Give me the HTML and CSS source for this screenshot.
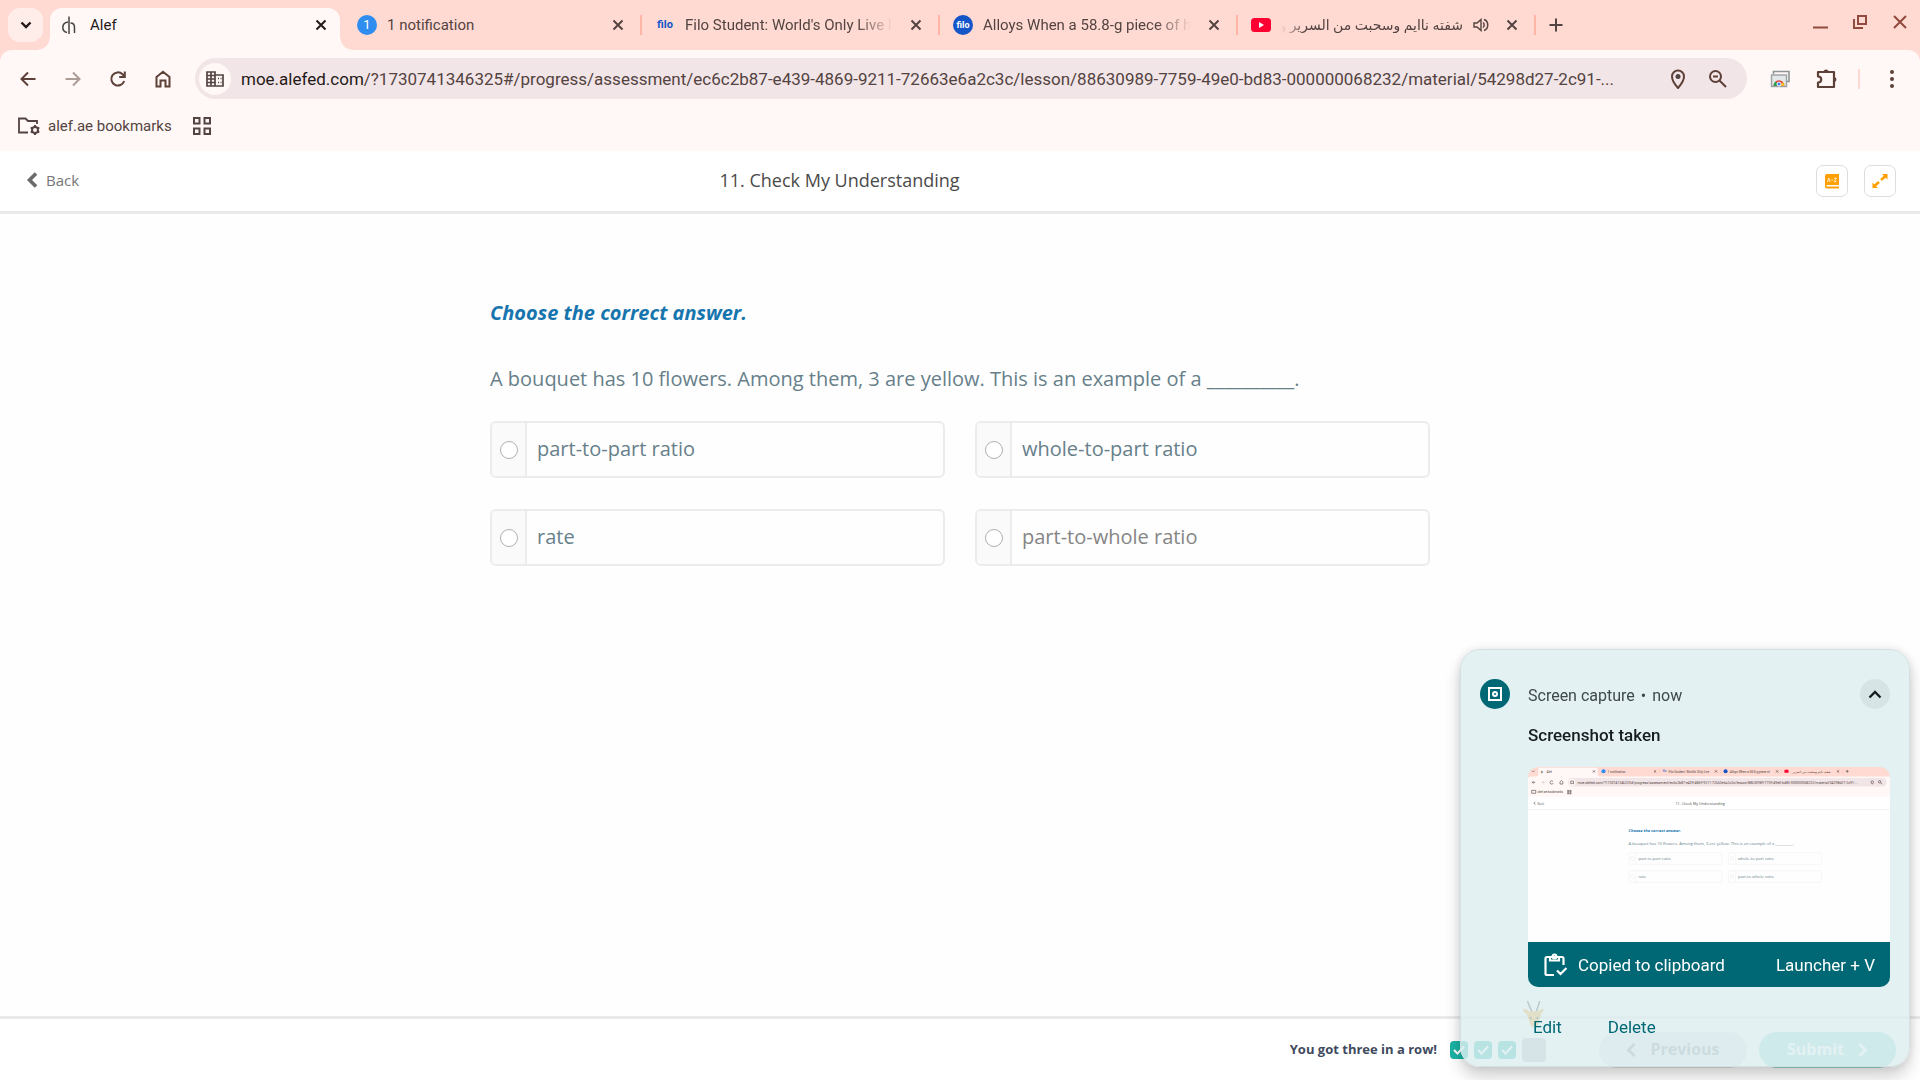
FILE: index.html
```html
<!DOCTYPE html>
<html lang="en">
  <head>
    <meta charset="utf-8">
    <title>Alef</title>
    <link rel="stylesheet" href="styles.css">
  </head>
  <body>
    <div class="browser">
      <div class="tab-strip">
        <button class="tab-search" aria-label="Search tabs">
          <svg width="12" height="8" viewBox="0 0 12 8"><path d="M1.5 1.5L6 6l4.500-4.500" fill="none" stroke="#231917" stroke-width="2.400"/></svg>
        </button>
        <div class="tab active">
          <svg class="favicon" width="20" height="20" viewBox="0 0 20 20"><path d="M9 1.500v17.500M8 7C4.500 7.500 2.800 10 2.800 12.500S4.500 17 7 17.500M10.500 8c2.500 0 4 1.500 4 4.500V18" fill="none" stroke="#444" stroke-width="1.500"/></svg>
          <span class="tab-title">Alef</span>
          <button class="tab-close" aria-label="Close tab"><svg width="12" height="12" viewBox="0 0 12 12"><path d="M1.500 1.500l9 9M10.500 1.500l-9 9"/></svg></button>
        </div>
        <div class="tab">
          <span class="favicon badge">1</span>
          <span class="tab-title">1 notification</span>
          <button class="tab-close" aria-label="Close tab"><svg width="12" height="12" viewBox="0 0 12 12"><path d="M1.500 1.500l9 9M10.500 1.500l-9 9"/></svg></button>
        </div>
        <div class="tab">
          <span class="favicon filo">filo</span>
          <span class="tab-title fade">Filo Student: World's Only Live I</span>
          <button class="tab-close" aria-label="Close tab"><svg width="12" height="12" viewBox="0 0 12 12"><path d="M1.500 1.500l9 9M10.500 1.500l-9 9"/></svg></button>
        </div>
        <div class="tab">
          <span class="favicon filo filo-round">filo</span>
          <span class="tab-title fade">Alloys When a 58.8-g piece of h</span>
          <button class="tab-close" aria-label="Close tab"><svg width="12" height="12" viewBox="0 0 12 12"><path d="M1.500 1.500l9 9M10.500 1.500l-9 9"/></svg></button>
        </div>
        <div class="tab">
          <svg class="favicon" width="20" height="20" viewBox="0 0 20 20"><rect y="3" width="20" height="14" rx="3.500" fill="#ff0033"/><path d="M8 7l5 3-5 3z" fill="#fff"/></svg>
          <span class="tab-title arabic" lang="ar" dir="rtl">شفته ناايم وسحبت من السرير و</span>
          <svg class="audio" width="16" height="14" viewBox="0 0 16 14"><path d="M1 5v4h3l4 3.500v-11L4 5z" fill="none" stroke="#534341" stroke-width="1.400"/><path d="M10 4.500c1.500 1 1.500 4 0 5M11 1.500c5 1.500 5 9.500 0 11" fill="none" stroke="#534341" stroke-width="1.500"/></svg>
          <button class="tab-close" aria-label="Close tab"><svg width="12" height="12" viewBox="0 0 12 12"><path d="M1.500 1.500l9 9M10.500 1.500l-9 9"/></svg></button>
        </div>
        <button class="new-tab" aria-label="New tab"><svg width="14" height="14" viewBox="0 0 14 14"><path d="M7 .5v13M.5 7h13" stroke="#534341" stroke-width="2"/></svg></button>
        <div class="window-controls">
          <button aria-label="Minimize"><svg width="16" height="16" viewBox="0 0 16 16"><path d="M1 13.500h15"/></svg></button>
          <button aria-label="Restore"><svg width="16" height="16" viewBox="0 0 16 16"><path d="M6 2h8v8H6zM2 5v9h9"/></svg></button>
          <button aria-label="Close"><svg width="16" height="16" viewBox="0 0 16 16"><path d="M2 2l12 12M14 2L2 14"/></svg></button>
        </div>
      </div>

      <div class="toolbar">
        <button aria-label="Back"><svg width="20" height="20" viewBox="0 0 20 20"><path d="M17.500 10H4M10 3.500L3.500 10l6.500 6.500"/></svg></button>
        <button class="disabled" aria-label="Forward"><svg width="20" height="20" viewBox="0 0 20 20"><path d="M2.500 10H16M10 3.500l6.500 6.500-6.500 6.500"/></svg></button>
        <button aria-label="Reload"><svg width="20" height="20" viewBox="0 0 20 20"><path d="M16.200 12A6.600 6.600 0 1 1 14.500 5.200l2 2.300M16.800 2.500V8h-5.600"/></svg></button>
        <button aria-label="Home"><svg width="20" height="20" viewBox="0 0 20 20"><path d="M3.500 8L10 2.800 16.500 8v9.500h-4v-6h-5v6h-4z"/></svg></button>
        <div class="omnibox">
          <span class="site-icon">
            <svg width="18" height="16" viewBox="0 0 18 16"><path d="M1 1h8v14H1zM9 4h8v11H9M1 4.500h8M1 8h8M1 11.500h8M5 1v14" fill="none" stroke="#534341" stroke-width="1.700"/><path d="M12 7.500h1M14.500 7.500h1M12 11.500h1M14.500 11.500h1" stroke="#534341" stroke-width="1.500"/></svg>
          </span>
          <span class="url"><b>moe.alefed.com</b>/?1730741346325#/progress/assessment/ec6c2b87-e439-4869-9211-72663e6a2c3c/lesson/88630989-7759-49e0-bd83-000000068232/material/54298d27-2c91-...</span>
          <button aria-label="Location"><svg width="20" height="20" viewBox="0 0 20 20"><path d="M10 19C5.500 14 4 10.500 4 7.500a6 6 0 0 1 12 0c0 3-1.500 6.500-6 11.500z"/><circle cx="10" cy="7.500" r="2.500" fill="#534341" stroke="none"/></svg></button>
          <button aria-label="Zoom"><svg width="20" height="20" viewBox="0 0 20 20"><circle cx="7.500" cy="7.500" r="5.500"/><path d="M11.500 11.500L18 18M5 7.500h5"/></svg></button>
        </div>
        <button aria-label="Gallery"><svg width="20" height="20" viewBox="0 0 20 20"><path d="M3.500 5V2.500h15.500v10H17" stroke="#8c9496" stroke-width="1.600"/><rect x="1.500" y="6" width="15" height="11.500" fill="#e4e7e8" stroke="#9aa1a3" stroke-width="1.400"/><path d="M3.500 16.800a5.500 5.500 0 0 1 11 0" stroke="none" fill="#e33b2e"/><path d="M3.500 16.800a5.500 5.500 0 0 1 2-4.300l3.500 4.300z" stroke="none" fill="#1fa552"/><path d="M14.500 16.800a5.500 5.500 0 0 0-1.500-3.500L9 16.800z" stroke="none" fill="#fbc116"/><circle cx="9" cy="15" r="2" stroke="#fff" stroke-width="1" fill="#3c7ce8"/></svg></button>
        <button aria-label="Extensions"><svg width="22" height="22" viewBox="0 0 22 22"><path d="M3 4h16v15H3v-4.500c2 0 3.200-1.300 3.200-3S5 8.500 3 8.500z" stroke-width="2.200" stroke-linejoin="round"/><path d="M8.500 4a2.500 2.500 0 0 1 5 0zM19 9a2.500 2.500 0 0 1 0 5z" fill="#5d4037" stroke="none"/></svg></button>
        <span class="divider"></span>
        <button aria-label="Menu"><svg width="20" height="20" viewBox="0 0 20 20"><g fill="#5d4037" stroke="none"><circle cx="10" cy="3" r="2"/><circle cx="10" cy="10" r="2"/><circle cx="10" cy="17" r="2"/></g></svg></button>
      </div>

      <div class="bookmarks">
        <button class="bookmark">
          <svg width="24" height="20" viewBox="0 0 24 20"><path d="M11 16.500H2v-14h6.500L11 5h9v3" fill="none" stroke="#534341" stroke-width="1.800"/><circle cx="18" cy="14" r="3" fill="none" stroke="#534341" stroke-width="2"/><path d="M18 9v2M18 17v2M13.700 11.500l1.700 1M20.600 15.500l1.700 1M13.700 16.500l1.700-1M20.600 12.500l1.700-1" stroke="#534341" stroke-width="2"/></svg>
          alef.ae bookmarks
        </button>
        <button class="bookmark" aria-label="Apps">
          <svg width="20" height="20" viewBox="0 0 20 20"><path d="M2 2h5.500v5.500H2zM12.500 2H18v5.500h-5.500zM2 12.500h5.500V18H2zM12.500 12.500H18V18h-5.500z" fill="none" stroke="#534341" stroke-width="2"/></svg>
        </button>
      </div>
    </div>

    <header class="lesson-header">
      <a class="back" href="#">
        <svg width="12" height="16" viewBox="0 0 12 16"><path d="M10 1.500L3.500 8l6.500 6.500" fill="none" stroke="#6b6b6b" stroke-width="3.600"/></svg>
        Back
      </a>
      <h1>11. Check My Understanding</h1>
      <div class="tools">
        <button aria-label="Glossary">
          <svg width="16" height="16" viewBox="0 0 16 16"><path d="M3 1h12v11H2.500v1.500H15V15.500H3A2 2 0 0 1 1 13.500V3a2 2 0 0 1 2-2z" fill="#ffa000"/><path d="M3.500 9l1.300-4 1.300 4M7.200 7h1.600M10 5.200h2.500L10 8.600h2.500" fill="none" stroke="#fff" stroke-width=".8"/></svg>
        </button>
        <button aria-label="Full screen">
          <svg width="16" height="16" viewBox="0 0 16 16"><path d="M10 1h5.500v5.500zM.5 9.500V15H6z" fill="#ffa000"/><path d="M13.500 3L9 7M7 9l-4.500 4" stroke="#ffa000" stroke-width="2.600"/></svg>
        </button>
      </div>
    </header>

    <main>
      <form class="question">
        <h2>Choose the correct answer.</h2>
        <p>A bouquet has 10 flowers. Among them, 3 are yellow. This is an example of a __________.</p>
        <div class="options">
          <label class="option"><span class="pick"><input type="radio" name="answer"></span><span class="answer">part-to-part ratio</span></label>
          <label class="option"><span class="pick"><input type="radio" name="answer"></span><span class="answer">whole-to-part ratio</span></label>
          <label class="option"><span class="pick"><input type="radio" name="answer"></span><span class="answer">rate</span></label>
          <label class="option"><span class="pick"><input type="radio" name="answer"></span><span class="answer grey">part-to-whole ratio</span></label>
        </div>
      </form>
    </main>

    <footer>
      <strong>You got three in a row!</strong>
      <div class="streak">
        <span class="done"><svg width="12" height="10" viewBox="0 0 12 10"><path d="M1 5l3.500 3.500L11 1.500"/></svg></span>
        <span class="done"><svg width="12" height="10" viewBox="0 0 12 10"><path d="M1 5l3.500 3.500L11 1.500"/></svg></span>
        <span class="done"><svg width="12" height="10" viewBox="0 0 12 10"><path d="M1 5l3.500 3.500L11 1.500"/></svg></span>
        <span class="current">
          <svg class="gazelle" width="24" height="28" viewBox="0 0 24 28"><path d="M10 13C9 8 7 6 5.500 1M14 13c1-5 3-7 3.500-12" fill="none" stroke="#2c2a35" stroke-width="1.500"/><path d="M1 9c4 0 6 2 7 4-3 2-6 0-7-4zM22 9c-4 0-6 2-7 4 3 2 6 0 7-4z" fill="#f59a10"/><path d="M5 14c2-4 12-4 14 0 0 4-2.500 5-3 10-1 4-7 4-8 0-.5-5-3-6-3-10z" fill="#f5a018"/><circle cx="8.500" cy="18" r="1.200" fill="#222"/><circle cx="15.500" cy="18" r="1.200" fill="#222"/></svg>
        </span>
      </div>
      <button class="nav-button previous">
        <svg width="10" height="14" viewBox="0 0 10 14"><path d="M8.500 1L2.500 7l6 6"/></svg>
        <span>Previous</span>
      </button>
      <button class="nav-button submit">
        <span>Submit</span>
        <svg width="10" height="14" viewBox="0 0 10 14"><path d="M1.500 1l6 6-6 6"/></svg>
      </button>
    </footer>

    <aside class="notification">
      <span class="app-icon">
        <svg width="14" height="14" viewBox="0 0 14 14"><path d="M1 1h12v12H1z" fill="none" stroke="#fff" stroke-width="2"/><circle cx="7" cy="7" r="2" fill="none" stroke="#fff" stroke-width="2"/></svg>
      </span>
      <div class="source">Screen capture<span>•</span>now</div>
      <button class="collapse" aria-label="Collapse"><svg width="14" height="9" viewBox="0 0 14 9"><path d="M1.500 7.500L7 2l5.500 5.500" fill="none" stroke="#171d1e" stroke-width="2.400"/></svg></button>
      <div class="details">
        <h3>Screenshot taken</h3>
        <div class="preview">
          <svg class="thumb" viewBox="0 4 1765 853" preserveAspectRatio="xMinYMin slice">
            <rect width="1765" height="857" fill="#fefefe"/>
            <rect width="1765" height="60" fill="#ffdad2"/>
            <path d="M0 151V60q0-10 10-10h30q10 0 10-10V20q0-12 12-12h266q12 0 12 12v20q0 10 10 10h1415v101z" fill="#fff8f6"/>
            <g class="thumb-browser" fill="#534341">
              <text x="62" y="31">ф</text><text x="90" y="31">Alef</text>
              <circle cx="368" cy="25" r="10" fill="#2f8df0"/><text x="388" y="31">1 notification</text>
              <text x="655" y="30" fill="#1455c8">filo</text><text x="685" y="31">Filo Student: World's Only Live</text>
              <circle cx="963" cy="25" r="10" fill="#1455c8"/><text x="983" y="31">Alloys When a 58.8-g piece of</text>
              <rect x="1250" y="18" width="20" height="14" rx="3" fill="#ff0033"/><text x="1290" y="31">شفته ناايم وسحبت من السرير</text>
              <text x="48" y="131">alef.ae bookmarks</text>
            </g>
            <path d="M20 22l6 6 6-6M316 20l11 11m0-11l-11 11M614 20l11 11m0-11l-11 11M911 20l11 11m0-11l-11 11M1209 20l11 11m0-11l-11 11M1506 20l11 11m0-11l-11 11M1549 25h14m-7-7v14" fill="none" stroke="#534341" stroke-width="3"/>
            <path d="M641 15v20M939 15v20M1236 15v20M1534 15v20" stroke="#ffb4a6" stroke-width="2"/>
            <rect x="195" y="58" width="1552" height="41" rx="20" fill="#f2e5e7"/>
            <circle cx="215" cy="79" r="16" fill="#fff8f6"/>
            <path d="M35 79H21l6-6m-6 6l6 6M123 82a8 8 0 1 1-1-7M156 87V76l7-6 7 6v11zM208 73h14v12h-14zM18 118h20v14H18zM193 118h6v6h-6zM204 118h6v6h-6zM193 129h6v6h-6zM204 129h6v6h-6zM1678 88c-4-5-6-7-6-11a6 6 0 0 1 12 0c0 4-2 6-6 11zM1718 80l8 8" fill="none" stroke="#534341" stroke-width="3"/>
            <path d="M65 79h14l-6-6m6 6l-6 6" fill="none" stroke="#b5a7a5" stroke-width="2"/>
            <circle cx="1714" cy="76" r="6" fill="none" stroke="#534341" stroke-width="3"/>
            <text class="thumb-url" x="241" y="85" fill="#534341">moe.alefed.com/?1730741346325#/progress/assessment/ec6c2b87-e439-4869-9211-72663e6a2c3c/lesson/88630989-7759-49e0-bd83-000000068232/material/54298d27-2c91-...</text>
            <rect y="151" width="1765" height="60" fill="#fff"/>
            <rect y="211" width="1765" height="3" fill="#e9ebea"/>
            <path d="M36 174l-7 7 7 7" fill="none" stroke="#6b6b6b" stroke-width="4"/>
            <text x="46" y="187" font-size="15" fill="#6b6b6b">Back</text>
            <text x="719" y="187" font-size="18" fill="#4a4a4a">11. Check My Understanding</text>
            <text x="490" y="320" font-size="20" font-weight="bold" font-style="italic" fill="#1775ae">Choose the correct answer.</text>
            <g font-size="20" fill="#67808a">
              <text x="490" y="386">A bouquet has 10 flowers. Among them, 3 are yellow. This is an example of a __________.</text>
              <text x="538" y="456">part-to-part ratio</text><text x="1023" y="456">whole-to-part ratio</text>
              <text x="538" y="544">rate</text><text x="1023" y="544">part-to-whole ratio</text>
            </g>
            <g fill="none" stroke="#ececec" stroke-width="2">
              <rect x="491" y="422" width="454" height="56" rx="5"/><rect x="976" y="422" width="454" height="56" rx="5"/>
              <rect x="491" y="510" width="454" height="56" rx="5"/><rect x="976" y="510" width="454" height="56" rx="5"/>
              <path d="M526 422v56M1011 422v56M526 510v56M1011 510v56"/>
            </g>
            <g fill="#fff" stroke="#c4c4c4"><circle cx="509" cy="450" r="9"/><circle cx="994" cy="450" r="9"/><circle cx="509" cy="538" r="9"/><circle cx="994" cy="538" r="9"/></g>
          </svg>
          <div class="copied">
            <svg width="24" height="24" viewBox="0 0 24 24"><path d="M11 22H4a1.500 1.500 0 0 1-1.500-1.500v-15A1.500 1.500 0 0 1 4 4h15a1.500 1.500 0 0 1 1.500 1.500V12M7 4v3.500h9V4M14 17.500l3.500 3.500 6-6" fill="none" stroke="#fff" stroke-width="2.200"/><circle cx="11.500" cy="3.500" r="2" fill="none" stroke="#fff" stroke-width="2"/></svg>
            <span>Copied to clipboard</span>
            <span class="shortcut">Launcher + V</span>
          </div>
        </div>
        <div class="actions">
          <button>Edit</button>
          <button>Delete</button>
        </div>
      </div>
    </aside>
  </body>
</html>
```
FILE: styles.css
```css
* {
  box-sizing: border-box;
}

body {
  margin: 0;
  min-height: 100vh;
  display: flex;
  flex-direction: column;
  background: #fefefe;
  font-family: "Open Sans", "Noto Sans", sans-serif;
}

button {
  padding: 0;
  border: 0;
  background: none;
  font: inherit;
  color: inherit;
  cursor: pointer;
}

svg {
  display: block;
}

/* browser */
.browser {
  background: #ffdad2;
  color: #534341;
  font-family: Roboto, "DejaVu Sans", sans-serif;
  font-size: 15px;
}

.tab-strip {
  display: flex;
  align-items: center;
  height: 50px;
  padding: 0 12px 0 8px;
}

.tab-search {
  display: flex;
  align-items: center;
  justify-content: center;
  width: 35px;
  height: 34px;
  margin-right: 7px;
  border-radius: 12px;
  background: #ffedea;
}

.tab {
  position: relative;
  flex: 0 1 298px;
  display: flex;
  align-items: center;
  gap: 10px;
  height: 34px;
  min-width: 0;
  padding: 0 18px 0 13px;
}

.tab:not(.active)::after {
  content: "";
  position: absolute;
  right: 0;
  top: 7px;
  width: 2px;
  height: 20px;
  background: #ffb4a6;
}

.tab.active {
  flex-basis: 290px;
  align-self: flex-end;
  height: 42px;
  margin-right: 4px;
  padding: 0 13px 8px 10px;
  border-radius: 12px 12px 0 0;
  background: #fff8f6;
  color: #231917;
}

.tab.active::before,
.tab.active::after {
  content: "";
  position: absolute;
  bottom: 0;
  width: 12px;
  height: 12px;
}

.tab.active::before {
  left: -12px;
  background: radial-gradient(circle at 0 0, #ffdad2 11px, #fff8f6 12px);
}

.tab.active::after {
  right: -12px;
  background: radial-gradient(circle at 100% 0, #ffdad2 11px, #fff8f6 12px);
}

.favicon {
  flex: none;
  width: 20px;
  height: 20px;
}

.badge {
  border-radius: 50%;
  background: #2f8df0;
  color: #fff;
  font-size: 13px;
  line-height: 20px;
  text-align: center;
}

.filo {
  color: #1455c8;
  font-size: 11px;
  font-weight: bold;
  line-height: 20px;
  text-align: center;
}

.filo-round {
  border-radius: 50%;
  background: #1455c8;
  color: #fff;
  font-size: 9px;
}

.tab-title {
  flex: 1;
  min-width: 0;
  overflow: hidden;
  white-space: nowrap;
}

.fade {
  mask-image: linear-gradient(to left, transparent, #000 36px);
}

.arabic {
  font-size: 14px;
  mask-image: linear-gradient(to right, transparent, #000 24px);
}

.tab-close {
  margin-left: 7px;
}

.tab-close svg {
  fill: none;
  stroke: currentColor;
  stroke-width: 2;
}

.new-tab {
  margin-left: 13px;
}

.window-controls {
  display: flex;
  gap: 24px;
  margin: 0 0 6px auto;
}

.window-controls svg {
  fill: none;
  stroke: #904a3e;
  stroke-width: 2;
}

.toolbar {
  display: flex;
  align-items: center;
  gap: 25px;
  padding: 8px 18px 0 18px;
  border-radius: 12px 12px 0 0;
  background: #fff8f6;
}

.toolbar button svg {
  fill: none;
  stroke: #5d4037;
  stroke-width: 2;
}

.toolbar .disabled {
  opacity: 0.5;
}

.omnibox {
  flex: 1;
  display: flex;
  align-items: center;
  gap: 20px;
  height: 41px;
  min-width: 0;
  margin: 0 -2px 0 -3px;
  padding: 0 19px 0 4px;
  border-radius: 21px;
  background: #f2e5e7;
}

.site-icon {
  flex: none;
  display: flex;
  align-items: center;
  justify-content: center;
  width: 32px;
  height: 32px;
  margin-right: -10px;
  border-radius: 50%;
  background: #fff8f6;
}

.url {
  flex: 1;
  min-width: 0;
  overflow: hidden;
  font-size: 17px;
  white-space: nowrap;
}

.url b {
  color: #231917;
  font-weight: normal;
}

.divider {
  width: 2px;
  height: 20px;
  margin: 0 -3px 0 -4px;
  background: #ffdad2;
}

.bookmarks {
  display: flex;
  align-items: center;
  gap: 20px;
  height: 52px;
  padding: 2px 17px 0;
  background: #fff8f6;
}

.bookmark {
  display: flex;
  align-items: center;
  gap: 7px;
}

/* lesson */
.lesson-header {
  display: grid;
  grid-template-columns: auto 1fr 296px;
  align-items: center;
  height: 63px;
  padding: 0 24px 0 26px;
  border-bottom: 3px solid #e9ebea;
  background: #fff;
}

.back {
  display: flex;
  align-items: center;
  gap: 8px;
  padding-bottom: 2px;
  color: #757575;
  font-size: 15px;
  line-height: 20px;
  text-decoration: none;
}

h1 {
  margin: 0;
  padding-bottom: 2px;
  color: #4a4a4a;
  font-size: 18px;
  font-weight: normal;
  line-height: 24px;
  text-align: center;
}

.tools {
  display: flex;
  justify-content: flex-end;
  gap: 16px;
}

.tools button {
  display: flex;
  align-items: center;
  justify-content: center;
  width: 32px;
  height: 32px;
  border: 1px solid #dedede;
  border-radius: 7px;
}

main {
  flex: 1;
  padding: 82px 24px;
}

.question {
  max-width: 940px;
  margin: 0 auto;
  color: #67808a;
  font-size: 20px;
  line-height: 34px;
}

h2 {
  margin: 0 0 32px;
  color: #1775ae;
  font-size: 20px;
  font-style: italic;
  font-weight: bold;
}

.question p {
  margin: 0 0 25px;
}

.options {
  display: grid;
  grid-template-columns: 1fr 1fr;
  gap: 31px 30px;
}

.option {
  display: flex;
  min-height: 57px;
  border: 2px solid #ececec;
  border-radius: 6px;
}

.pick {
  display: flex;
  align-items: center;
  padding: 0 7px 0 8px;
  border-right: 2px solid #ececec;
  border-radius: 4px 0 0 4px;
  background: #fafafa;
}

.pick input {
  appearance: none;
  width: 18px;
  height: 18px;
  margin: 0;
  border: 1px solid #b0b0b0;
  border-radius: 50%;
  background: #fff;
}

.answer {
  align-self: center;
  padding: 0 0 2px 10px;
}

.grey {
  color: #858585;
}

footer {
  display: flex;
  align-items: center;
  justify-content: flex-end;
  height: 64px;
  padding: 0 24px;
  border-top: 3px solid #e9ebea;
  background: #fff;
  color: #3f4a5e;
  font-size: 13px;
}

footer strong,
.nav-button span {
  padding-bottom: 2px;
}

.streak {
  display: flex;
  align-items: center;
  gap: 6px;
  margin: 0 53px 0 13px;
}

.done {
  display: flex;
  align-items: center;
  justify-content: center;
  width: 18px;
  height: 18px;
  border-radius: 4px;
  background: #1ab3a6;
}

.done svg {
  fill: none;
  stroke: #fff;
  stroke-width: 2;
}

.current {
  position: relative;
  width: 24px;
  height: 24px;
  border-radius: 4px;
  background: #b8bcbf;
}

.gazelle {
  position: absolute;
  left: 0;
  bottom: 34px;
}

.nav-button {
  display: flex;
  align-items: center;
  justify-content: center;
  gap: 14px;
  height: 36px;
  border-radius: 18px;
  font-size: 16px;
  font-weight: bold;
  line-height: 20px;
}

.nav-button svg {
  fill: none;
  stroke: currentColor;
  stroke-width: 3;
}

.previous {
  width: 148px;
  margin-right: 12px;
  background: #e3e5e6;
  color: #808a90;
}

.submit {
  width: 137px;
  background: #90d8cf;
  color: #fff;
}

/* notification */
.notification {
  position: fixed;
  right: 10px;
  bottom: 13px;
  display: grid;
  grid-template-columns: 30px 1fr 30px;
  column-gap: 18px;
  align-items: center;
  width: 450px;
  padding: 29px 19px;
  border: 1px solid #d3e0e1;
  border-radius: 20px;
  background: rgba(221, 238, 240, 0.81);
  box-shadow: 0 10px 16px rgba(0, 0, 0, 0.18), 0 0 10px rgba(0, 0, 0, 0.1);
  color: #171d1e;
  font-family: Roboto, sans-serif;
  font-size: 17px;
}

.app-icon,
.collapse {
  display: flex;
  align-items: center;
  justify-content: center;
  width: 30px;
  height: 30px;
  border-radius: 50%;
}

.app-icon {
  background: #006874;
}

.collapse {
  background: #d7e4e5;
}

.source {
  padding-top: 2px;
  color: #3f484a;
  font-size: 16px;
}

.source span {
  margin: 0 6px;
}

.details {
  grid-column: 2 / -1;
}

h3 {
  margin: 16px 0 22px;
  font-size: 17px;
  font-weight: 500;
  line-height: 20px;
}

.preview {
  overflow: hidden;
  border-radius: 10px;
}

.thumb {
  width: 100%;
  height: 175px;
  font-family: "Open Sans", "DejaVu Sans", sans-serif;
}

.thumb-browser {
  font-family: Roboto, "DejaVu Sans", sans-serif;
  font-size: 15px;
}

.thumb-url {
  font-family: Roboto, sans-serif;
  font-size: 17px;
}

.copied {
  display: flex;
  align-items: center;
  gap: 11px;
  height: 45px;
  padding: 0 15px;
  background: #006874;
  color: #fff;
}

.shortcut {
  margin-left: auto;
}

.actions {
  display: flex;
  gap: 46px;
  margin-top: 30px;
  padding-left: 5px;
  color: #006874;
  line-height: 20px;
}
```
